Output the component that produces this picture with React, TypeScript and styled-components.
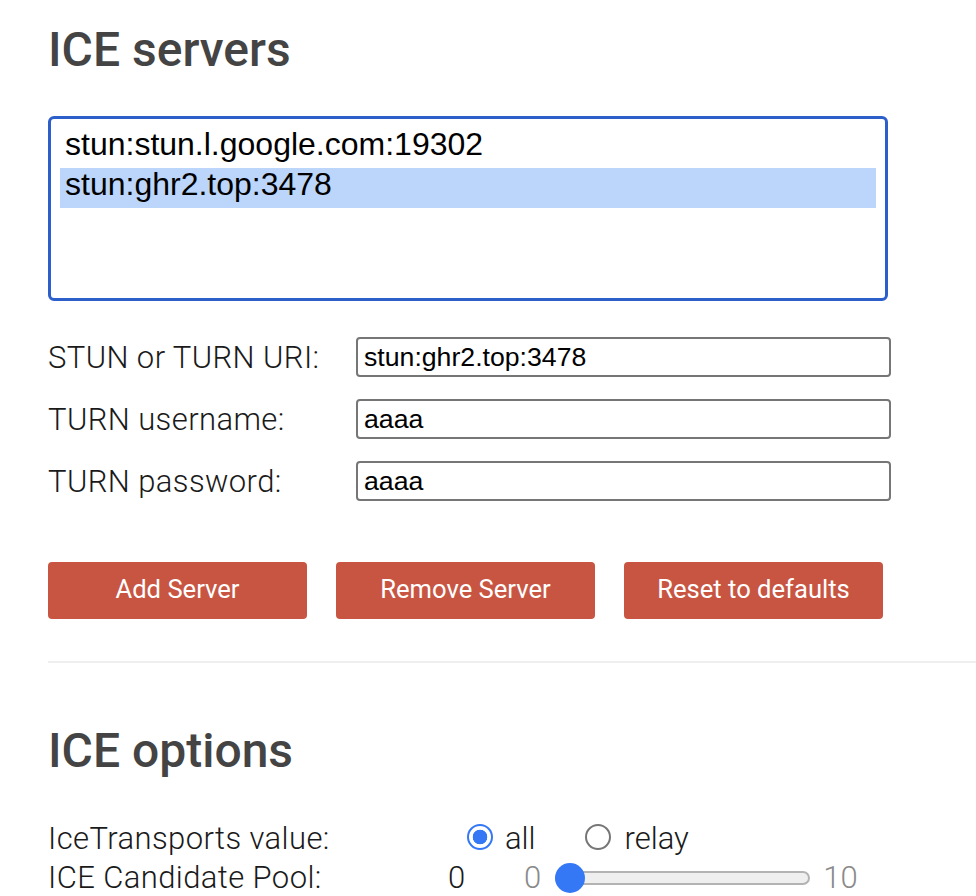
import React from 'react';
import styled, { createGlobalStyle } from 'styled-components';

const GlobalStyle = createGlobalStyle`
  html, body {
    margin: 0;
    padding: 0;
    background: #fff;
  }
  body {
    font-family: Roboto, "Liberation Sans", sans-serif;
    overflow: hidden;
  }
`;

const Page = styled.div`
  padding: 22px 0 0 48px;
`;

const Heading = styled.h2`
  margin: 0;
  font-family: Roboto, sans-serif;
  font-weight: 500;
  font-size: 48px;
  line-height: 56px;
  color: #444;
`;

const ServerList = styled.div`
  box-sizing: border-box;
  width: 840px;
  height: 185px;
  margin-top: 38px;
  padding: 9px;
  border: 3px solid #2d5fcb;
  border-radius: 6px;
`;

const ServerOption = styled.div<{ $selected?: boolean }>`
  height: 40px;
  box-sizing: border-box;
  padding: 0 0 7px 5px;
  font-family: "Liberation Sans", Arial, sans-serif;
  font-size: 32px;
  line-height: 33px;
  color: #000;
  background: ${(p) => (p.$selected ? '#bbd6fa' : 'transparent')};
`;

const FieldGrid = styled.div`
  display: grid;
  grid-template-columns: 308px 535px;
  row-gap: 22px;
  margin-top: 36px;
`;

const FieldLabel = styled.label`
  display: flex;
  align-items: center;
  height: 40px;
  font-family: Roboto, sans-serif;
  font-weight: 300;
  font-size: 31px;
  letter-spacing: 0.4px;
  color: #1a1a1a;
  white-space: nowrap;
`;

const TextInput = styled.input`
  box-sizing: border-box;
  height: 40px;
  width: 100%;
  padding: 0 6px;
  border: 2px solid #767676;
  border-radius: 4px;
  font-family: "Liberation Sans", Arial, sans-serif;
  font-size: 26.67px;
  color: #000;
  outline: none;
`;

const ButtonRow = styled.div`
  display: flex;
  gap: 29px;
  margin-top: 61px;
`;

const RedButton = styled.button`
  width: 259px;
  height: 57px;
  border: none;
  border-radius: 4px;
  background: #c85542;
  color: #fff;
  font-family: Roboto, sans-serif;
  font-weight: 400;
  font-size: 25.6px;
  padding: 0 0 3px;
`;

const Divider = styled.hr`
  margin: 42px 0 0;
  border: none;
  border-top: 2px solid #eee;
`;

const OptionsHeading = styled(Heading)`
  margin-top: 60px;
`;

const OptionGrid = styled.div`
  display: grid;
  grid-template-columns: 400px 1fr;
  margin-top: 40px;
`;

const OptionLabel = styled.div`
  height: 39px;
  font-family: Roboto, sans-serif;
  font-weight: 300;
  font-size: 31px;
  letter-spacing: 0.4px;
  line-height: 39px;
  color: #1a1a1a;
  white-space: nowrap;
`;

const OptionValue = styled.div`
  display: flex;
  align-items: center;
  height: 39px;
  font-family: Roboto, sans-serif;
  font-weight: 300;
  font-size: 31px;
  color: #1a1a1a;
`;

const RadioChoice = styled.span`
  display: inline-flex;
  align-items: center;
  gap: 12px;
  margin-right: 49px;
  padding-left: 19px;

  & + & {
    padding-left: 0;
    gap: 14px;
  }
`;

const RadioDot = styled.span<{ $checked?: boolean }>`
  box-sizing: border-box;
  width: 26px;
  height: 26px;
  border-radius: 50%;
  margin-top: -4px;
  border: ${(p) => (p.$checked ? '2.5px solid #3478f6' : '2px solid #767676')};
  background: ${(p) => (p.$checked ? 'radial-gradient(circle, #3478f6 0 7px, #fff 7.6px)' : '#fff')};
`;

const PoolValue = styled.span`
  width: 76px;
`;

const RangeEnd = styled.span`
  color: #8a8a8a;
`;

const Track = styled.div`
  position: relative;
  box-sizing: border-box;
  width: 255px;
  height: 14px;
  margin: 0 13px 0 14px;
  border: 2px solid #b3b3b3;
  border-radius: 7px;
  background: #efefef;
`;

const Thumb = styled.span`
  position: absolute;
  left: -2px;
  top: 50%;
  width: 30px;
  height: 30px;
  margin-top: -15px;
  border-radius: 50%;
  background: #3478f6;
`;

const servers = ['stun:stun.l.google.com:19302', 'stun:ghr2.top:3478'];

const App = () => {
  return (
    <Page>
      <GlobalStyle />
      <Heading>ICE servers</Heading>
      <ServerList>
        {servers.map((s, i) => (
          <ServerOption key={s} $selected={i === 1}>
            {s}
          </ServerOption>
        ))}
      </ServerList>

      <FieldGrid>
        <FieldLabel>STUN or TURN URI:</FieldLabel>
        <TextInput defaultValue="stun:ghr2.top:3478" />
        <FieldLabel>TURN username:</FieldLabel>
        <TextInput defaultValue="aaaa" />
        <FieldLabel>TURN password:</FieldLabel>
        <TextInput defaultValue="aaaa" />
      </FieldGrid>

      <ButtonRow>
        <RedButton>Add Server</RedButton>
        <RedButton>Remove Server</RedButton>
        <RedButton>Reset to defaults</RedButton>
      </ButtonRow>

      <Divider />

      <OptionsHeading>ICE options</OptionsHeading>
      <OptionGrid>
        <OptionLabel>IceTransports value:</OptionLabel>
        <OptionValue>
          <RadioChoice>
            <RadioDot $checked />
            all
          </RadioChoice>
          <RadioChoice>
            <RadioDot />
            relay
          </RadioChoice>
        </OptionValue>
        <OptionLabel>ICE Candidate Pool:</OptionLabel>
        <OptionValue>
          <PoolValue>0</PoolValue>
          <RangeEnd>0</RangeEnd>
          <Track>
            <Thumb />
          </Track>
          <RangeEnd>10</RangeEnd>
        </OptionValue>
      </OptionGrid>
    </Page>
  );
};

export default App;
